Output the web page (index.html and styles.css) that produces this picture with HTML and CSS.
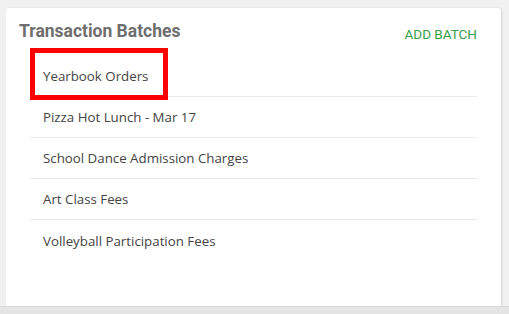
FILE: index.html
```html
<!DOCTYPE html>
<html lang="en">
<head>
    <meta charset="UTF-8">
    <meta name="viewport" content="width=device-width, initial-scale=1.0">
    <title>Transaction Batches</title>
    <link rel="stylesheet" href="styles.css">
</head>
<body>

<div class="page">
    <div class="card">
        <div class="card-header">
            <h2>Transaction Batches</h2>
            <a href="#" class="add-btn">ADD BATCH</a>
        </div>

        <ul class="batches">
            <li class="batch highlighted">Yearbook Orders</li>
            <li class="batch">Pizza Hot Lunch - Mar 17</li>
            <li class="batch">School Dance Admission Charges</li>
            <li class="batch">Art Class Fees</li>
            <li class="batch">Volleyball Participation Fees</li>
        </ul>
    </div>
</div>
<div class="bottom-bar"></div>

</body>
</html>
```

FILE: styles.css
```css
*, *::before, *::after{
    margin: 0;
    padding: 0;
    box-sizing: border-box;
}

body{
    background-color: rgb(241, 241, 241);
    height: 314px;
    overflow: hidden;
    display: flex;
    flex-direction: column;
}

.page{
    padding: 8px 8px 0 6px;
    flex: 1;
    display: flex;
}

.card{
    flex: 1;
    background-color: white;
    border-radius: 3px 3px 0 0;
    box-shadow: 1px 0 2px rgba(0, 0, 0, 0.12);
    padding: 12px 24px 0 13px;
}

.card-header{
    display: flex;
    justify-content: space-between;
    align-items: flex-start;
    height: 36px;
}

.card-header h2{
    font-family: Roboto, "Liberation Sans", sans-serif;
    font-size: 17.5px;
    font-weight: bold;
    line-height: 22px;
    color: rgb(110, 110, 110);
}

.add-btn{
    font-family: Roboto, "Liberation Sans", sans-serif;
    font-size: 13.5px;
    line-height: 16px;
    margin-top: 6px;
    color: rgb(56, 158, 72);
    text-decoration: none;
}

.batches{
    list-style: none;
    margin-left: 11px;
}

.batch{
    position: relative;
    height: 41px;
    padding-left: 13px;
    display: flex;
    align-items: center;
    border-bottom: 1px solid rgb(234, 234, 234);
    font-family: "Open Sans", "DejaVu Sans", sans-serif;
    font-size: 13.3px;
    color: rgb(68, 68, 68);
}

.batch:last-child{
    border-bottom: none;
}

/* red annotation box over the first row */
.highlighted::after{
    content: "";
    position: absolute;
    left: 0;
    top: -8px;
    width: 138px;
    height: 52px;
    border: 5px solid rgb(255, 0, 0);
}

.bottom-bar{
    height: 8px;
    background-color: rgb(229, 229, 229);
    border-top: 1px solid rgb(214, 214, 214);
}
```
